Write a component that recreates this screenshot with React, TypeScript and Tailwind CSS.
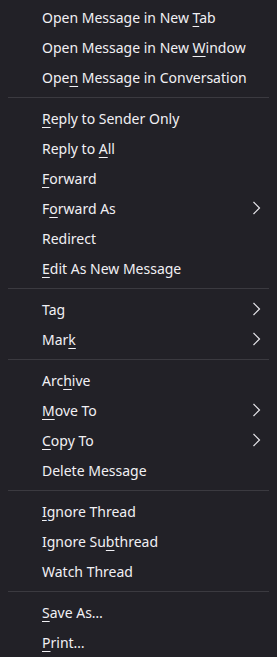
import React from "react";

type Item = { label: string; key?: number; sub?: boolean };

const groups: Item[][] = [
  [
    { label: "Open Message in New Tab", key: 20 },
    { label: "Open Message in New Window", key: 20 },
    { label: "Open Message in Conversation", key: 3 },
  ],
  [
    { label: "Reply to Sender Only", key: 0 },
    { label: "Reply to All", key: 9 },
    { label: "Forward", key: 0 },
    { label: "Forward As", key: 1, sub: true },
    { label: "Redirect" },
    { label: "Edit As New Message", key: 0 },
  ],
  [
    { label: "Tag", sub: true },
    { label: "Mark", key: 3, sub: true },
  ],
  [
    { label: "Archive", key: 3 },
    { label: "Move To", key: 0, sub: true },
    { label: "Copy To", key: 0, sub: true },
    { label: "Delete Message" },
  ],
  [
    { label: "Ignore Thread", key: 0 },
    { label: "Ignore Subthread", key: 9 },
    { label: "Watch Thread" },
  ],
  [
    { label: "Save As…", key: 0 },
    { label: "Print…", key: 0 },
  ],
];

function Label({ item }: { item: Item }) {
  if (item.key === undefined) return <span>{item.label}</span>;
  const k = item.key;
  return (
    <span>
      {item.label.slice(0, k)}
      <u className="underline decoration-1 underline-offset-[3px]">{item.label[k]}</u>
      {item.label.slice(k + 1)}
    </span>
  );
}

function Chevron() {
  return (
    <svg width="9" height="14" viewBox="0 0 9 14" className="text-[#e8e7ec]">
      <polyline points="1.5,1 7.5,7 1.5,13" fill="none" stroke="currentColor" strokeWidth="1.2" />
    </svg>
  );
}

export default function App() {
  return (
    <div
      className="w-[277px] h-[657px] overflow-hidden bg-[#222127] text-[#f1f0f4] pt-[2px]"
      style={{ fontFamily: '"Noto Sans", "Open Sans", sans-serif' }}
    >
      {groups.map((g, gi) => (
        <div key={gi}>
          {gi > 0 && (
            <div className="h-[11px] flex items-center px-2">
              <div className="h-px w-full bg-[#3b3a40]" />
            </div>
          )}
          {g.map((item, i) => (
            <div key={i} className="h-[30px] flex items-center pl-[42px] pr-[16px] text-[14px]">
              <div className="flex-1">
                <Label item={item} />
              </div>
              {item.sub && <Chevron />}
            </div>
          ))}
        </div>
      ))}
    </div>
  );
}
